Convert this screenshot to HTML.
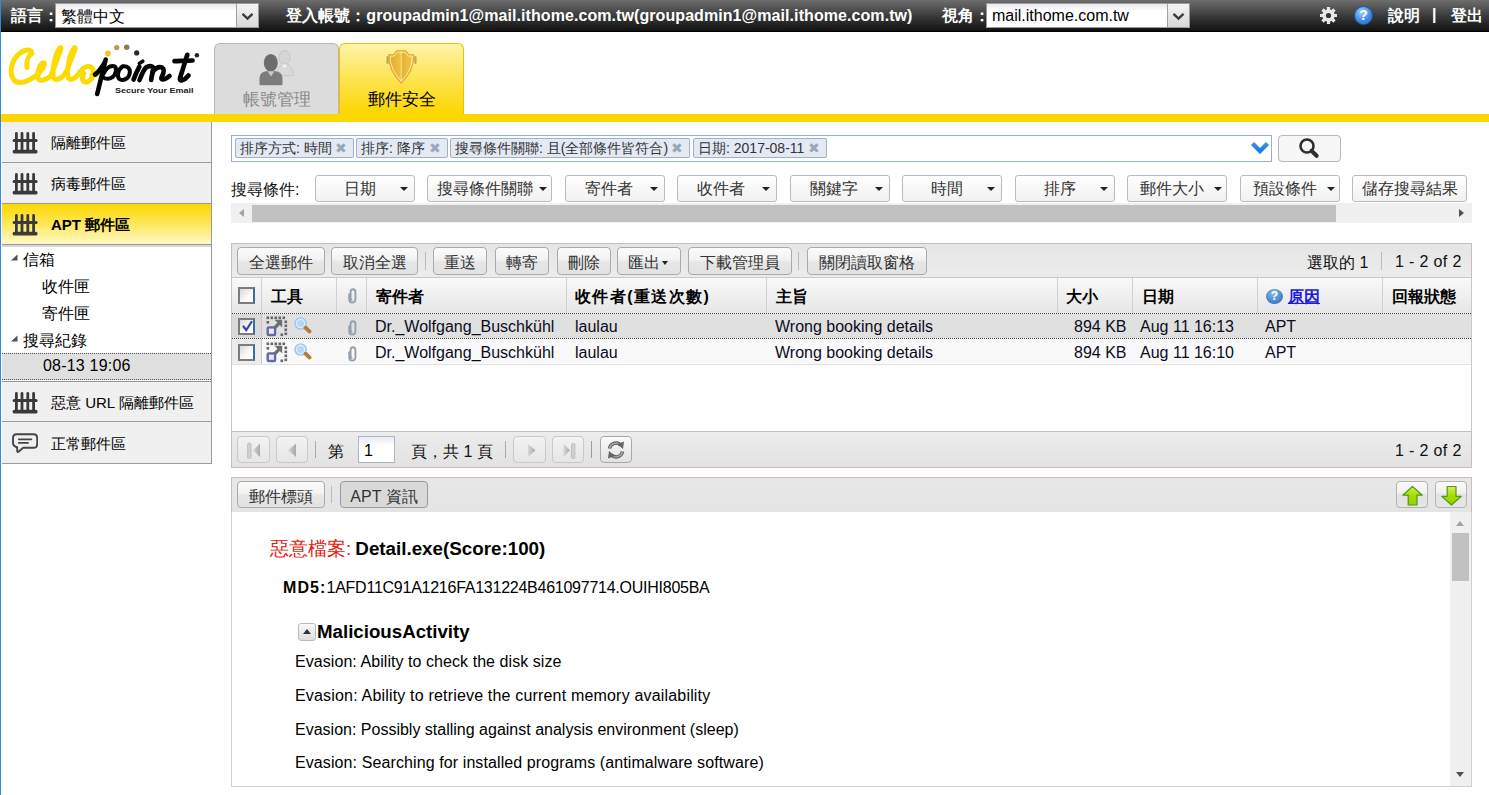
<!DOCTYPE html>
<html><head><meta charset="utf-8">
<style>
*{box-sizing:border-box;margin:0;padding:0}
html,body{width:1489px;height:795px;overflow:hidden;background:#fff;font-family:"Liberation Sans",sans-serif;font-size:15px;color:#000}
.abs{position:absolute}
#blue{left:0;top:0;width:1px;height:795px;background:#2a8be0;z-index:50}
#top{left:0;top:0;width:1489px;height:32px;background:linear-gradient(#6e6e6e,#3a3a3a 50%,#131313 95%,#000 96.9%)}
.tw{color:#fff;font-weight:bold;font-size:16px;top:6px;white-space:nowrap}
.sel{background:linear-gradient(#e8e8ee,#fff 30%);border:1px solid #9a9a9a;height:25px;top:3px}
.sel .t{position:absolute;left:5px;top:3px;font-size:16px;color:#000;white-space:nowrap}
.sel .arr{position:absolute;right:0;top:0;width:22px;height:23px;background:linear-gradient(#f4f4f4,#d8d8d8);border-left:1px solid #a0a0a0}
#ybar{left:0;top:114px;width:1489px;height:8px;background:#fcd700}
.tab{top:43px;height:71px;border-radius:6px 6px 0 0;text-align:center}
.nav{left:2px;width:210px;height:41px;background:#f0f0f0;border:1px solid #9a9a9a;border-top:none;border-left:none}
.nav .lbl{position:absolute;left:49px;top:12px;font-size:15px;white-space:nowrap}
.tree{left:2px;font-size:16px;white-space:nowrap}
.chip{position:absolute;top:2px;height:20px;border:1px solid #9fb1cf;background:#e4e9f3;border-radius:2px;font-size:14px;color:#333;padding:0 0 0 4px;white-space:nowrap;line-height:18px}
.chip b{position:absolute;right:6px;top:0;color:#9aa6bd;font-weight:normal;font-size:14px}
.fbtn{position:absolute;top:175px;height:27px;border:1px solid #bbb;border-radius:3px;background:linear-gradient(#fff,#f1f1f1);font-size:16px;color:#333;white-space:nowrap}
.fbtn .c{position:absolute;top:3px}
.fbtn .dd{position:absolute;top:11px;width:0;height:0;border-left:4px solid transparent;border-right:4px solid transparent;border-top:4px solid #222}
.btn{position:absolute;top:4px;height:28px;border:1px solid #aaa;border-radius:4px;background:linear-gradient(#fbfbfb,#f3f3f3 42%,#e6e6e6 55%,#e2e2e2);font-size:16px;color:#333;white-space:nowrap;text-align:center;padding-top:5px}
.vsep{position:absolute;width:1px;background:#bbb}
.hd{position:absolute;top:0;height:35px;font-weight:bold;font-size:16px;padding:10px 0 0 8px;border-right:1px solid #d0d0d0;white-space:nowrap}
.cell{position:absolute;font-size:16px;white-space:nowrap}
</style></head><body>
<div id="blue" class="abs"></div>

<!-- TOP BAR -->
<div id="top" class="abs">
  <div class="abs tw" style="left:11px">語言：</div>
  <div class="abs sel" style="left:55px;width:204px"><span class="t">繁體中文</span><span class="arr"><svg style="position:absolute;left:4px;top:8px" width="13" height="9" viewBox="0 0 13 9"><path d="M1.5 1.8 L6.5 6.5 L11.5 1.8" fill="none" stroke="#3a3a3a" stroke-width="2.4"/></svg></span></div>
  <div class="abs tw" style="left:286px;letter-spacing:0.075px">登入帳號：groupadmin1@mail.ithome.com.tw(groupadmin1@mail.ithome.com.tw)</div>
  <div class="abs tw" style="left:942px">視角：</div>
  <div class="abs sel" style="left:986px;width:204px"><span class="t">mail.ithome.com.tw</span><span class="arr"><svg style="position:absolute;left:4px;top:8px" width="13" height="9" viewBox="0 0 13 9"><path d="M1.5 1.8 L6.5 6.5 L11.5 1.8" fill="none" stroke="#3a3a3a" stroke-width="2.4"/></svg></span></div>
  <svg class="abs" style="left:1319px;top:6px" width="19" height="19" viewBox="0 0 19 19"><g fill="#e6e6e6"><circle cx="9.5" cy="9.5" r="6.2"/><g stroke="#e6e6e6" stroke-width="3.2"><path d="M9.5 1v17M1 9.5h17M3.5 3.5l12 12M15.5 3.5l-12 12"/></g></g><circle cx="9.5" cy="9.5" r="2.6" fill="#333"/></svg>
  <div class="abs" style="left:1354px;top:6px;width:19px;height:19px;border-radius:50%;background:radial-gradient(circle at 40% 30%,#9fd0ff,#3a86e0 60%,#2a6cc8);border:1px solid #1e5bb0;color:#fff;font-size:14px;font-weight:bold;text-align:center;line-height:17px">?</div>
  <div class="abs tw" style="left:1388px">說明</div>
  <div class="abs tw" style="left:1432px">|</div>
  <div class="abs tw" style="left:1451px">登出</div>
</div>

<!-- LOGO -->
<svg class="abs" style="left:0;top:36px" width="210" height="70" viewBox="0 36 210 70">
  <g fill="none" stroke="#fbdc00" stroke-width="5" stroke-linecap="round" stroke-linejoin="round">
    <path d="M27 67.5 C26 60.5 29 55.5 31.8 53.5 C31.5 49 25.5 48.8 19.5 53.5 C11.5 60 8.5 73 14 80 C19 85.5 29 81 37 75"/>
    <path d="M37 75 C41 71 45.5 65.5 44 63 C41.5 61.5 37 70 37.8 77.5 C39 82.5 46 80 51 76"/>
    <path d="M51 76 C54 68 59.5 53 60.8 49 C62 45.5 57.5 48.5 55 59 C53 68 51.5 79 56 79.5 C60 79.5 63.5 76 66 72.5"/>
    <path d="M66 72.5 C69 64 73.8 53 75 49 C76.2 45.5 72 48.5 69.5 59 C67.5 68 66.2 79 70.5 79.5 C74.5 79.5 78 75 80.5 71.5"/>
    <path d="M80.5 71.5 C83 67.5 87 65.8 90.5 66.8 C94.8 68.2 94 78 88.5 81.5 C83.5 84 80.5 79 84 73.5"/>
  </g>
  <path d="M91.5 75 C93 74 95 74 96.5 75.5" fill="none" stroke="#fbdc00" stroke-width="4" stroke-linecap="round"/>
  <g fill="none" stroke="#050505" stroke-width="4.6" stroke-linecap="round" stroke-linejoin="round">
    <path d="M95 74.5 C98 72.5 101.5 68 104.5 63"/>
    <path d="M105.7 59.5 C103 70 99.5 85 97.2 94"/>
  </g>
  <g fill="none" stroke="#050505" stroke-width="4" stroke-linecap="round" stroke-linejoin="round">
    <path d="M103 74.5 C106 68.5 110 65.5 114 66.2 C117.5 67.5 116 74.5 112.5 77.2 C109.5 79.5 105 79.2 103.5 77.5"/>
    <path d="M122.5 66.3 C127.5 65.5 131 69 129.6 74 C128.3 78.8 123.5 81 120 79.5 C116.5 77.8 117.5 70 122.5 66.3"/>
  </g>
  <g fill="none" stroke="#050505" stroke-width="4.7" stroke-linecap="round" stroke-linejoin="round">
    <path d="M133.6 79.5 C135.2 75 137.5 70 139.3 66.8"/>
    <path d="M139.5 80 C141.5 75 143.8 69.5 146.3 67.3 C149.3 65.2 153.8 65.8 153.2 69.7 C152.7 73 151.2 77 151.2 80"/>
    <path d="M152.5 72 C155.5 68 159 66.5 162 67.5 C164.8 69 163.2 74 161.7 77 C160.2 80 163.5 80.8 169.5 76"/>
    <path d="M187.3 54.8 C185 62 182 72 180 78 C179 82 184 81 188.5 75.5"/>
    <path d="M174.5 61.2 C180 61 187 60.6 192.5 60.5"/>
  </g>
  <path d="M139.3 63.6 L142.8 61.2" stroke="#050505" stroke-width="3.6" stroke-linecap="round"/>
  <circle cx="107.9" cy="53.5" r="2.9" fill="#ecc81a"/>
  <circle cx="116.7" cy="47.6" r="2.7" fill="#b89e48"/>
  <circle cx="126.7" cy="47.3" r="2.7" fill="#8a7a50"/>
  <circle cx="136.7" cy="52.9" r="2.6" fill="#2a2a2a"/>
  <circle cx="196.9" cy="55.3" r="2.2" fill="#222"/>
  <text x="115" y="93" font-family="Liberation Sans" font-weight="bold" font-size="7.6" fill="#222" textLength="78.5" lengthAdjust="spacingAndGlyphs">Secure Your Email</text>
</svg>

<!-- TABS -->
<div class="abs tab" style="left:214px;width:125px;background:#dcdcdc;border:1px solid #b8b8b8;border-bottom:none">
  <svg style="position:absolute;left:44px;top:6px" width="38" height="36" viewBox="0 0 38 36">
    <ellipse cx="25.5" cy="7.5" rx="5.6" ry="6.8" fill="#d6d6d6" stroke="#c4c4c4" stroke-width="1"/>
    <path d="M18 25.5 Q17.5 15 25.5 14 Q34.5 15 34.8 25.5 Z" fill="#d9d9d9" stroke="#cacaca" stroke-width="1"/>
    <path d="M23 14.5 L25.5 18.5 L28 14.5 Z" fill="#f2f2f2"/>
    <ellipse cx="11.8" cy="12.8" rx="7" ry="8.8" fill="#6c6c6c"/>
    <path d="M0.5 34.5 V28 Q1 21.5 8 21 H16 Q23 21.5 23.5 28 V34.5 Q23.5 35.2 22 35.2 H2 Q0.5 35.2 0.5 34.5 Z" fill="#7c7c7c"/>
    <path d="M8.5 21.2 L12 26.5 L15.5 21.2 Z" fill="#c8c8c8"/>
  </svg>
  <div style="position:absolute;left:0;width:100%;top:44px;font-size:17px;color:#8a8a8a">帳號管理</div>
</div>
<div class="abs tab" style="left:339px;width:125px;background:linear-gradient(#fff5a8,#fde040 60%,#fcd700);border:1px solid #f0c000;border-bottom:none">
  <svg style="position:absolute;left:46px;top:6px" width="31" height="36" viewBox="0 0 31 36"><defs><linearGradient id="shg" x1="0" x2="1"><stop offset="0" stop-color="#e0ac28"/><stop offset="0.45" stop-color="#ecc040"/><stop offset="0.5" stop-color="#f6dc78"/><stop offset="0.55" stop-color="#e6b430"/><stop offset="1" stop-color="#eec850"/></linearGradient></defs>
    <rect x="0.5" y="6" width="2.2" height="8" rx="1" fill="#a88a30" opacity="0.7"/><rect x="28.3" y="6" width="2.2" height="8" rx="1" fill="#a88a30" opacity="0.7"/>
    <path d="M10.7 0.8 H19.7 L23 4.8 H27.8 Q28.6 20 15.3 33.2 Q2 20 2.8 4.8 H7.4 Z" fill="url(#shg)" stroke="#e8a438" stroke-width="1.1" stroke-linejoin="round"/>
    <path d="M11.2 2.2 H19.2 L22.4 6.1 H26.4 Q26.8 19.5 15.3 31.2 Q3.8 19.5 4.2 6.1 H8.1 Z" fill="none" stroke="#fff2b0" stroke-width="0.9" stroke-linejoin="round"/></svg>
  <div style="position:absolute;left:0;width:100%;top:44px;font-size:17px;color:#000">郵件安全</div>
</div>
<div id="ybar" class="abs"></div>

<!-- LEFT NAV -->
<div class="abs nav" style="top:122px"><span class="lbl">隔離郵件區</span><svg style="position:absolute;left:10px;top:9px" width="28" height="24" viewBox="0 0 28 24"><g fill="#3a3a3c"><rect x="3" y="1" width="2.8" height="21" rx="1.4"/><rect x="8.6" y="1" width="2.8" height="21" rx="1.4"/><rect x="14.4" y="1" width="2.8" height="21" rx="1.4"/><rect x="20.2" y="1" width="2.8" height="21" rx="1.4"/><rect x="0.6" y="8" width="25" height="3" rx="1.5"/><rect x="0.6" y="18.8" width="25" height="3.8" rx="1.9"/></g></svg></div>
<div class="abs nav" style="top:163px"><span class="lbl">病毒郵件區</span><svg style="position:absolute;left:10px;top:9px" width="28" height="24" viewBox="0 0 28 24"><g fill="#3a3a3c"><rect x="3" y="1" width="2.8" height="21" rx="1.4"/><rect x="8.6" y="1" width="2.8" height="21" rx="1.4"/><rect x="14.4" y="1" width="2.8" height="21" rx="1.4"/><rect x="20.2" y="1" width="2.8" height="21" rx="1.4"/><rect x="0.6" y="8" width="25" height="3" rx="1.5"/><rect x="0.6" y="18.8" width="25" height="3.8" rx="1.9"/></g></svg></div>
<div class="abs nav" style="top:204px;background:linear-gradient(#fcd700,#fde85a 50%,#fff9c8)"><span class="lbl" style="font-weight:bold">APT 郵件區</span><svg style="position:absolute;left:10px;top:9px" width="28" height="24" viewBox="0 0 28 24"><g fill="#3a3a3c"><rect x="3" y="1" width="2.8" height="21" rx="1.4"/><rect x="8.6" y="1" width="2.8" height="21" rx="1.4"/><rect x="14.4" y="1" width="2.8" height="21" rx="1.4"/><rect x="20.2" y="1" width="2.8" height="21" rx="1.4"/><rect x="0.6" y="8" width="25" height="3" rx="1.5"/><rect x="0.6" y="18.8" width="25" height="3.8" rx="1.9"/></g></svg></div>
<div class="abs" style="left:2px;top:245px;width:210px;height:136px;border-right:1px solid #9a9a9a"></div><div class="abs" style="left:2px;top:245px;width:209px;height:2px;background:#d6d6d6"></div>
<svg class="abs" style="left:10px;top:254px" width="8" height="7" viewBox="0 0 8 7"><path d="M7.5 0.5 V6.5 H1 Z" fill="#505050"/></svg><div class="abs tree" style="left:23px;top:250px">信箱</div>
<div class="abs tree" style="left:42px;top:277px">收件匣</div>
<div class="abs tree" style="left:42px;top:304px">寄件匣</div>
<svg class="abs" style="left:10px;top:335px" width="8" height="7" viewBox="0 0 8 7"><path d="M7.5 0.5 V6.5 H1 Z" fill="#505050"/></svg><div class="abs tree" style="left:23px;top:331px">搜尋紀錄</div>
<div class="abs" style="left:2px;top:353px;width:209px;height:27px;background:#e0e0e0;border-top:1px dotted #555;border-bottom:1px dotted #555"></div>
<div class="abs tree" style="left:43px;top:357px;letter-spacing:0.2px">08-13 19:06</div>
<div class="abs nav" style="top:381px;border-top:1px solid #9a9a9a"><span class="lbl">惡意 URL 隔離郵件區</span><svg style="position:absolute;left:10px;top:9px" width="28" height="24" viewBox="0 0 28 24"><g fill="#3a3a3c"><rect x="3" y="1" width="2.8" height="21" rx="1.4"/><rect x="8.6" y="1" width="2.8" height="21" rx="1.4"/><rect x="14.4" y="1" width="2.8" height="21" rx="1.4"/><rect x="20.2" y="1" width="2.8" height="21" rx="1.4"/><rect x="0.6" y="8" width="25" height="3" rx="1.5"/><rect x="0.6" y="18.8" width="25" height="3.8" rx="1.9"/></g></svg></div>
<div class="abs nav" style="top:422px;height:42px"><span class="lbl" style="top:13px">正常郵件區</span><svg style="position:absolute;left:8px;top:10px" width="28" height="22" viewBox="0 0 28 22"><path d="M6.5 2.2 H23.5 Q27.2 2.2 27.2 6 V12 Q27.2 15.8 23.5 15.8 H13.2 L8.5 19.8 Q7.2 20.6 7.2 19 V15.3 Q3 14.4 3 10.5 V6 Q3 2.2 6.5 2.2 Z" fill="none" stroke="#454545" stroke-width="1.9" stroke-linejoin="round"/><path d="M8.8 7.3 H21.4 M8.8 10.9 H18" stroke="#454545" stroke-width="1.8" stroke-linecap="round"/></svg></div>


<!-- SEARCH TAGS -->
<div class="abs" style="left:231px;top:135px;width:1041px;height:27px;border:1px solid #98acd6;background:#fff">
  <div class="chip" style="left:3px;width:119px">排序方式: 時間<b>✖</b></div>
  <div class="chip" style="left:124px;width:92px">排序: 降序<b>✖</b></div>
  <div class="chip" style="left:218px;width:240px">搜尋條件關聯: 且(全部條件皆符合)<b>✖</b></div>
  <div class="chip" style="left:461px;width:134px">日期: 2017-08-11<b>✖</b></div>
  <svg style="position:absolute;left:1018px;top:4px" width="20" height="14" viewBox="0 0 20 14"><defs><linearGradient id="chg" x1="0" y1="0" x2="0" y2="1"><stop offset="0" stop-color="#4a8ad8"/><stop offset="1" stop-color="#1080f0"/></linearGradient></defs><path d="M2.5 3.5 L10 11 L17.5 3.5" fill="none" stroke="url(#chg)" stroke-width="4.4"/></svg>
</div>
<div class="abs" style="left:1278px;top:135px;width:63px;height:27px;border:1px solid #b8b8b8;border-radius:4px;background:#f7f7f7">
  <svg style="position:absolute;left:18px;top:1px" width="26" height="22" viewBox="0 0 26 22"><circle cx="10" cy="9" r="6.5" fill="none" stroke="#2e2e2e" stroke-width="2.6"/><path d="M14.2 13.4 L19.5 18.6" stroke="#2e2e2e" stroke-width="3" stroke-linecap="round"/><path d="M16 15.2 L19.6 18.7" stroke="#2e2e2e" stroke-width="4.2" stroke-linecap="round"/></svg>
</div>

<!-- FILTERS -->
<div class="abs" style="left:231px;top:180px;font-size:16px;color:#111;white-space:nowrap">搜尋條件:</div>
<div class="fbtn" style="left:315px;width:100px"><span class="c" style="left:28px">日期</span><span class="dd" style="left:84px"></span></div>
<div class="fbtn" style="left:427px;width:125px"><span class="c" style="left:9px">搜尋條件關聯</span><span class="dd" style="left:111px"></span></div>
<div class="fbtn" style="left:565px;width:100px"><span class="c" style="left:19px">寄件者</span><span class="dd" style="left:84px"></span></div>
<div class="fbtn" style="left:677px;width:100px"><span class="c" style="left:19px">收件者</span><span class="dd" style="left:84px"></span></div>
<div class="fbtn" style="left:790px;width:100px"><span class="c" style="left:19px">關鍵字</span><span class="dd" style="left:84px"></span></div>
<div class="fbtn" style="left:902px;width:100px"><span class="c" style="left:28px">時間</span><span class="dd" style="left:84px"></span></div>
<div class="fbtn" style="left:1015px;width:100px"><span class="c" style="left:28px">排序</span><span class="dd" style="left:84px"></span></div>
<div class="fbtn" style="left:1127px;width:100px"><span class="c" style="left:12px">郵件大小</span><span class="dd" style="left:86px"></span></div>
<div class="fbtn" style="left:1240px;width:100px"><span class="c" style="left:12px">預設條件</span><span class="dd" style="left:86px"></span></div>
<div class="fbtn" style="left:1352px;width:115px"><span class="c" style="left:9px">儲存搜尋結果</span></div>

<!-- H SCROLL -->
<div class="abs" style="left:231px;top:203px;width:1241px;height:20px;background:#f0f0f0">
  <div style="position:absolute;left:8px;top:6px;width:0;height:0;border-top:4.5px solid transparent;border-bottom:4.5px solid transparent;border-right:5px solid #a3a3a3"></div>
  <div style="position:absolute;left:21px;top:2px;width:1084px;height:17px;background:#c1c1c1"></div>
  <div style="position:absolute;left:1228px;top:6px;width:0;height:0;border-top:4.5px solid transparent;border-bottom:4.5px solid transparent;border-left:5px solid #505050"></div>
</div>

<!-- GRID -->
<div class="abs" style="left:231px;top:243px;width:1241px;height:225px;border:1px solid #c8c8c8;border-top-color:#c9bcbc;background:#fff">
  <div style="position:absolute;left:-1px;top:-1px;width:1241px;height:35px;border:1px solid #c9bcbc;border-bottom:none"></div><div style="position:absolute;left:0;top:0;width:1239px;height:34px;background:linear-gradient(#e5e5e5,#ececec);border-bottom:1px solid #c8c8c8"></div>
</div>
<div class="btn" style="left:237px;top:247px;width:88px">全選郵件</div>
<div class="btn" style="left:331px;top:247px;width:87px">取消全選</div>
<div class="vsep" style="left:425px;top:252px;height:18px"></div>
<div class="btn" style="left:433px;top:247px;width:54px">重送</div>
<div class="btn" style="left:495px;top:247px;width:54px">轉寄</div>
<div class="btn" style="left:557px;top:247px;width:54px">刪除</div>
<div class="btn" style="left:617px;top:247px;width:64px;text-align:left;padding-left:10px">匯出<span style="display:inline-block;margin-left:2px;vertical-align:3px;border-left:3px solid transparent;border-right:3px solid transparent;border-top:4px solid #222"></span></div>
<div class="btn" style="left:688px;top:247px;width:104px">下載管理員</div>
<div class="vsep" style="left:798px;top:252px;height:18px"></div>
<div class="btn" style="left:807px;top:247px;width:120px">關閉讀取窗格</div>
<div class="abs cell" style="left:1307px;top:253px;color:#111">選取的 1</div>
<div class="vsep" style="left:1381px;top:252px;height:18px"></div>
<div class="abs cell" style="left:1395px;top:253px;color:#111;letter-spacing:0.35px">1 - 2 of 2</div>

<!-- HEADER -->
<div class="abs" style="left:232px;top:278px;width:1239px;height:35px;background:linear-gradient(#f9f9f9,#e6e6e6)"></div>
<div class="abs" style="left:232px;top:313px;width:1239px;height:1px;border-top:1px dotted #444"></div>
<div class="abs" style="left:261px;top:278px;width:1px;height:35px;background:#d0d0d0"></div>
<div class="abs" style="left:336px;top:278px;width:1px;height:35px;background:#d0d0d0"></div>
<div class="abs" style="left:366px;top:278px;width:1px;height:35px;background:#d0d0d0"></div>
<div class="abs" style="left:566px;top:278px;width:1px;height:35px;background:#d0d0d0"></div>
<div class="abs" style="left:766px;top:278px;width:1px;height:35px;background:#d0d0d0"></div>
<div class="abs" style="left:1057px;top:278px;width:1px;height:35px;background:#d0d0d0"></div>
<div class="abs" style="left:1132px;top:278px;width:1px;height:35px;background:#d0d0d0"></div>
<div class="abs" style="left:1257px;top:278px;width:1px;height:35px;background:#d0d0d0"></div>
<div class="abs" style="left:1382px;top:278px;width:1px;height:35px;background:#d0d0d0"></div>
<div class="abs" style="left:238px;top:287px;width:17px;height:17px;border:2px solid #7c7c7c;border-right-color:#3d6d9a;background:linear-gradient(135deg,#d8d8dc,#fafafa 60%,#fff)"></div>
<div class="abs cell" style="left:271px;top:287px;font-weight:bold">工具</div>
<svg class="abs" style="left:347px;top:288px" width="10" height="16" viewBox="0 0 10 16"><path d="M2.2 5.5 V11 Q2.2 14.6 5.2 14.6 Q8.4 14.6 8.4 11 V4 Q8.4 1.2 6 1.2 Q3.6 1.2 3.6 4 V9.8 Q3.8 12.2 5.4 11.8" fill="none" stroke="#94a0ac" stroke-width="1.9"/></svg>
<div class="abs cell" style="left:376px;top:287px;font-weight:bold">寄件者</div>
<div class="abs cell" style="left:575px;top:287px;font-weight:bold;letter-spacing:1.4px">收件者(重送次數)</div>
<div class="abs cell" style="left:776px;top:287px;font-weight:bold">主旨</div>
<div class="abs cell" style="left:1066px;top:287px;font-weight:bold">大小</div>
<div class="abs cell" style="left:1142px;top:287px;font-weight:bold">日期</div>
<div class="abs" style="left:1266px;top:289px;width:17px;height:15px;border-radius:50%;background:radial-gradient(circle at 45% 30%,#8cc0f0,#3a7cc4 70%,#2f6cb4);color:#fff;font-size:12px;font-weight:bold;text-align:center;line-height:15px">?</div>
<div class="abs cell" style="left:1288px;top:287px;font-weight:bold;color:#1a1ae0;text-decoration:underline">原因</div>
<div class="abs cell" style="left:1392px;top:287px;font-weight:bold">回報狀態</div>

<!-- ROWS -->
<div class="abs" style="left:232px;top:314px;width:1239px;height:24px;background:#e0e0e0"></div>
<div class="abs" style="left:232px;top:338px;width:1239px;height:1px;border-top:1px dotted #444"></div>
<div class="abs" style="left:232px;top:339px;width:1239px;height:26px;background:#f9f9f9;border-bottom:1px solid #e2e2e2"></div>


<!-- ROW CONTENT -->
<div class="abs" style="left:232px;top:314px;width:29px;height:24px;background:#d9d9d9"></div><div class="abs" style="left:232px;top:339px;width:29px;height:25px;background:#ececec"></div>
<div class="abs" style="left:238px;top:318px;width:17px;height:17px;border:2px solid #7c7c7c;border-right-color:#3d6d9a;background:linear-gradient(135deg,#d8d8dc,#fafafa 60%,#fff)"><svg style="position:absolute;left:1px;top:0" width="13" height="13" viewBox="0 0 13 13"><path d="M2.5 6.5 L5.2 10 L10.5 2" fill="none" stroke="#3346a8" stroke-width="2.2" stroke-linecap="round"/></svg></div>
<div class="abs" style="left:238px;top:344px;width:17px;height:17px;border:2px solid #7c7c7c;border-right-color:#3d6d9a;background:linear-gradient(135deg,#d8d8dc,#fafafa 60%,#fff)"></div>
<div class="abs" style="left:261px;top:314px;width:1px;height:24px;background:#e0b8b8"></div><div class="abs" style="left:261px;top:339px;width:1px;height:25px;background:#c8c8c8"></div>
<svg class="abs" style="left:266px;top:316px" width="22" height="21" viewBox="0 0 22 21"><g fill="#666"><rect x="0.5" y="0.5" width="2.6" height="2.6"/><rect x="4.5" y="0.5" width="2.6" height="2.6"/><rect x="8.5" y="0.5" width="2.6" height="2.6"/><rect x="12.5" y="0.5" width="2.6" height="2.6"/><rect x="16.5" y="0.5" width="2.6" height="2.6"/><rect x="18.5" y="4.5" width="2.6" height="2.6"/><rect x="18.5" y="8.5" width="2.6" height="2.6"/><rect x="18.5" y="12.5" width="2.6" height="2.6"/><rect x="18.5" y="16.5" width="2.6" height="2.6"/><rect x="14.5" y="17.5" width="2.6" height="2.6"/><rect x="0.5" y="5" width="2.6" height="2.6"/></g><rect x="0.5" y="10.2" width="9.8" height="10" rx="2.2" fill="#6468a8"/><rect x="2.9" y="12.6" width="5" height="5.2" fill="#e8e8ff"/><path d="M8 12.5 L13.5 7" stroke="#6e6e6e" stroke-width="3.2"/><path d="M8.5 3.8 H16.2 V11.5 Z" fill="#6e6e6e"/></svg>
<svg class="abs" style="left:293px;top:316px" width="19" height="21" viewBox="0 0 19 21"><circle cx="7.6" cy="7.5" r="6.3" fill="#9cc4ec"/><circle cx="7.6" cy="7.5" r="4.9" fill="#dcecfb"/><circle cx="7.6" cy="7.5" r="3.6" fill="#b8d6f2"/><path d="M12.6 11.8 L16.4 15.4" stroke="#b47c36" stroke-width="4" stroke-linecap="round"/></svg>
<svg class="abs" style="left:347px;top:320px" width="10" height="16" viewBox="0 0 10 16"><path d="M2.2 5.5 V11 Q2.2 14.6 5.2 14.6 Q8.4 14.6 8.4 11 V4 Q8.4 1.2 6 1.2 Q3.6 1.2 3.6 4 V9.8 Q3.8 12.2 5.4 11.8" fill="none" stroke="#94a0ac" stroke-width="1.9"/></svg>
<svg class="abs" style="left:266px;top:342px" width="22" height="21" viewBox="0 0 22 21"><g fill="#666"><rect x="0.5" y="0.5" width="2.6" height="2.6"/><rect x="4.5" y="0.5" width="2.6" height="2.6"/><rect x="8.5" y="0.5" width="2.6" height="2.6"/><rect x="12.5" y="0.5" width="2.6" height="2.6"/><rect x="16.5" y="0.5" width="2.6" height="2.6"/><rect x="18.5" y="4.5" width="2.6" height="2.6"/><rect x="18.5" y="8.5" width="2.6" height="2.6"/><rect x="18.5" y="12.5" width="2.6" height="2.6"/><rect x="18.5" y="16.5" width="2.6" height="2.6"/><rect x="14.5" y="17.5" width="2.6" height="2.6"/><rect x="0.5" y="5" width="2.6" height="2.6"/></g><rect x="0.5" y="10.2" width="9.8" height="10" rx="2.2" fill="#6468a8"/><rect x="2.9" y="12.6" width="5" height="5.2" fill="#e8e8ff"/><path d="M8 12.5 L13.5 7" stroke="#6e6e6e" stroke-width="3.2"/><path d="M8.5 3.8 H16.2 V11.5 Z" fill="#6e6e6e"/></svg>
<svg class="abs" style="left:293px;top:342px" width="19" height="21" viewBox="0 0 19 21"><circle cx="7.6" cy="7.5" r="6.3" fill="#9cc4ec"/><circle cx="7.6" cy="7.5" r="4.9" fill="#dcecfb"/><circle cx="7.6" cy="7.5" r="3.6" fill="#b8d6f2"/><path d="M12.6 11.8 L16.4 15.4" stroke="#b47c36" stroke-width="4" stroke-linecap="round"/></svg>
<svg class="abs" style="left:347px;top:346px" width="10" height="16" viewBox="0 0 10 16"><path d="M2.2 5.5 V11 Q2.2 14.6 5.2 14.6 Q8.4 14.6 8.4 11 V4 Q8.4 1.2 6 1.2 Q3.6 1.2 3.6 4 V9.8 Q3.8 12.2 5.4 11.8" fill="none" stroke="#94a0ac" stroke-width="1.9"/></svg>
<div class="abs cell" style="left:375px;top:318px;color:#0c0c1c">Dr._Wolfgang_Buschkühl</div>
<div class="abs cell" style="left:575px;top:318px;color:#0c0c1c">laulau</div>
<div class="abs cell" style="left:775px;top:318px;color:#0c0c1c">Wrong booking details</div>
<div class="abs cell" style="left:1074px;top:318px;color:#0c0c1c">894 KB</div>
<div class="abs cell" style="left:1140px;top:318px;color:#0c0c1c">Aug 11 16:13</div>
<div class="abs cell" style="left:1265px;top:318px;color:#0c0c1c">APT</div>
<div class="abs cell" style="left:375px;top:344px;color:#0c0c1c">Dr._Wolfgang_Buschkühl</div>
<div class="abs cell" style="left:575px;top:344px;color:#0c0c1c">laulau</div>
<div class="abs cell" style="left:775px;top:344px;color:#0c0c1c">Wrong booking details</div>
<div class="abs cell" style="left:1074px;top:344px;color:#0c0c1c">894 KB</div>
<div class="abs cell" style="left:1140px;top:344px;color:#0c0c1c">Aug 11 16:10</div>
<div class="abs cell" style="left:1265px;top:344px;color:#0c0c1c">APT</div>

<!-- PAGER -->
<div class="abs" style="left:231px;top:431px;width:1241px;height:37px;background:linear-gradient(#ececec,#e2e2e2);border:1px solid #c9bcbc"></div>
<div style="position:absolute;top:436px;height:27px;border:1px solid #c9c9c9;border-radius:4px;background:linear-gradient(#f2f2f2,#ececec 50%,#e6e6e6);left:237px;width:33px"><svg style="position:absolute;left:8px;top:5px" width="16" height="17" viewBox="0 0 16 17"><defs><linearGradient id="gtri" x1="0" x2="1"><stop offset="0" stop-color="#d8d8d8"/><stop offset="1" stop-color="#a8a8a8"/></linearGradient></defs><rect x="1.6" y="1.2" width="3.4" height="15" rx="1" fill="#d0d0d0" stroke="#b8b8b8" stroke-width="0.8"/><path d="M14 1.5 V15 L7 8.2 Z" fill="url(#gtri)"/></svg></div>
<div style="position:absolute;top:436px;height:27px;border:1px solid #c9c9c9;border-radius:4px;background:linear-gradient(#f2f2f2,#ececec 50%,#e6e6e6);left:276px;width:32px"><svg style="position:absolute;left:9px;top:5px" width="12" height="17" viewBox="0 0 12 17"><path d="M10 1.5 V15 L2 8.2 Z" fill="url(#gtri)"/></svg></div>
<div class="vsep" style="left:315px;top:441px;height:17px;background:#aaa"></div>
<div class="abs cell" style="left:328px;top:442px;color:#111">第</div>
<div class="abs" style="left:358px;top:436px;width:37px;height:27px;border:1px solid #aab4cc;background:linear-gradient(#e6eaf0,#fff 35%);font-size:16px;padding:5px 0 0 5px">1</div>
<div class="abs cell" style="left:411px;top:442px;color:#111">頁，共 1 頁</div>
<div class="vsep" style="left:505px;top:441px;height:17px;background:#aaa"></div>
<div style="position:absolute;top:436px;height:27px;border:1px solid #c9c9c9;border-radius:4px;background:linear-gradient(#f2f2f2,#ececec 50%,#e6e6e6);left:513px;width:33px"><svg style="position:absolute;left:12px;top:5px" width="12" height="17" viewBox="0 0 12 17"><path d="M2 2 V15 L9.5 8.2 Z" fill="url(#gtri)"/></svg></div>
<div style="position:absolute;top:436px;height:27px;border:1px solid #c9c9c9;border-radius:4px;background:linear-gradient(#f2f2f2,#ececec 50%,#e6e6e6);left:552px;width:32px"><svg style="position:absolute;left:9px;top:5px" width="16" height="17" viewBox="0 0 16 17"><path d="M1.5 2 V15 L8 8.2 Z" fill="url(#gtri)"/><rect x="9.5" y="1.5" width="3.4" height="15" rx="1" fill="#d0d0d0" stroke="#b8b8b8" stroke-width="0.8"/></svg></div>
<div class="vsep" style="left:591px;top:441px;height:17px;background:#a09a90"></div>
<div style="position:absolute;left:600px;top:436px;width:32px;height:27px;border:1px solid #a8a8a8;border-radius:4px;background:linear-gradient(#fafafa,#eeeeee 50%,#e2e2e2)"><svg style="position:absolute;left:5px;top:3px" width="20" height="20" viewBox="0 0 20 20"><g fill="none" stroke="#555" stroke-width="3.4"><path d="M3.5 8.5 A6.5 6.5 0 0 1 14.5 5"/><path d="M16.5 11.5 A6.5 6.5 0 0 1 5.5 15"/></g><g fill="none" stroke="#a8a8a8" stroke-width="1.6"><path d="M3.5 8.5 A6.5 6.5 0 0 1 14.5 5"/><path d="M16.5 11.5 A6.5 6.5 0 0 1 5.5 15"/></g><path d="M11 4 L18 1.5 L17 9 Z" fill="#666"/><path d="M9 16 L2 18.5 L3 11 Z" fill="#666"/></svg></div>
<div class="abs cell" style="left:1395px;top:442px;color:#111;letter-spacing:0.35px">1 - 2 of 2</div>

<!-- DETAIL -->
<div class="abs" style="left:231px;top:477px;width:1241px;height:310px;border:1px solid #d0d0d0;border-top-color:#c9bcbc;background:#fff"></div><div class="abs" style="left:231px;top:477px;width:1241px;height:35px;border:1px solid #c9bcbc;border-bottom:none"></div>
<div class="abs" style="left:232px;top:478px;width:1239px;height:34px;background:linear-gradient(#e8e8e8,#e4e4e4)"></div>
<div class="btn" style="left:237px;top:481px;width:88px;height:27px">郵件標頭</div>
<div class="vsep" style="left:331px;top:486px;height:17px"></div>
<div class="btn" style="left:340px;top:481px;width:88px;height:27px;background:#d9d9d9;border-color:#999">APT 資訊</div>
<div style="position:absolute;top:481px;height:27px;border:1px solid #b4b4b4;border-radius:4px;background:linear-gradient(#fafafa,#f0f0f0 45%,#e2e2e2 50%,#e6e6e6);left:1396px;width:32px"><svg style="position:absolute;left:5px;top:3px" width="22" height="21" viewBox="0 0 22 21"><defs><linearGradient id="gup" x1="0" y1="0" x2="0" y2="1"><stop offset="0" stop-color="#d4ec60"/><stop offset="0.5" stop-color="#a8dc00"/><stop offset="1" stop-color="#98d000"/></linearGradient></defs><path d="M10.5 1.5 L20.3 10.2 H15 V20 H6.2 V10.2 H0.8 Z" fill="url(#gup)" stroke="#4f9c12" stroke-width="1.2" stroke-linejoin="round"/></svg></div>
<div style="position:absolute;top:481px;height:27px;border:1px solid #b4b4b4;border-radius:4px;background:linear-gradient(#fafafa,#f0f0f0 45%,#e2e2e2 50%,#e6e6e6);left:1435px;width:32px"><svg style="position:absolute;left:5px;top:3px" width="22" height="21" viewBox="0 0 22 21"><path d="M10.5 20 L20.3 11.3 H15 V1.5 H6.2 V11.3 H0.8 Z" fill="url(#gup)" stroke="#4f9c12" stroke-width="1.2" stroke-linejoin="round"/></svg></div>
<div class="abs" style="left:1450px;top:512px;width:21px;height:274px;background:#f0f0f0">
  <div style="position:absolute;left:6px;top:9px;border-left:4px solid transparent;border-right:4px solid transparent;border-bottom:5px solid #a3a3a3"></div>
  <div style="position:absolute;left:2px;top:21px;width:17px;height:48px;background:#c1c1c1"></div>
  <div style="position:absolute;left:6px;top:260px;border-left:4px solid transparent;border-right:4px solid transparent;border-top:5px solid #505050"></div>
</div>

<div class="abs" style="left:270px;top:536px;white-space:nowrap"><span style="color:#e0200e;font-size:18.5px">惡意檔案:</span> <span style="font-weight:bold;font-size:18.8px">Detail.exe(Score:100)</span></div>
<div class="abs" style="left:283px;top:579px;white-space:nowrap;font-size:16px"><b style="letter-spacing:1.1px">MD5:</b><span id="hex" style="letter-spacing:-0.25px">1AFD11C91A1216FA131224B461097714.OUIHI805BA</span></div>
<div class="abs" style="left:298px;top:623px;width:18px;height:18px;border:1px solid #bbb;border-radius:3px;background:linear-gradient(#fafafa,#ddd)"><div style="position:absolute;left:4px;top:5px;border-left:4px solid transparent;border-right:4px solid transparent;border-bottom:5px solid #333"></div></div>
<div class="abs" style="left:317px;top:621px;white-space:nowrap;font-size:18.7px;font-weight:bold">MaliciousActivity</div>
<div class="abs cell" style="left:295px;top:653px;letter-spacing:0.06px">Evasion: Ability to check the disk size</div>
<div class="abs cell" style="left:295px;top:687px;letter-spacing:0.18px">Evasion: Ability to retrieve the current memory availability</div>
<div class="abs cell" style="left:295px;top:721px">Evasion: Possibly stalling against analysis environment (sleep)</div>
<div class="abs cell" style="left:295px;top:754px;letter-spacing:0.1px">Evasion: Searching for installed programs (antimalware software)</div>

<div id="main"></div>
</body></html>
